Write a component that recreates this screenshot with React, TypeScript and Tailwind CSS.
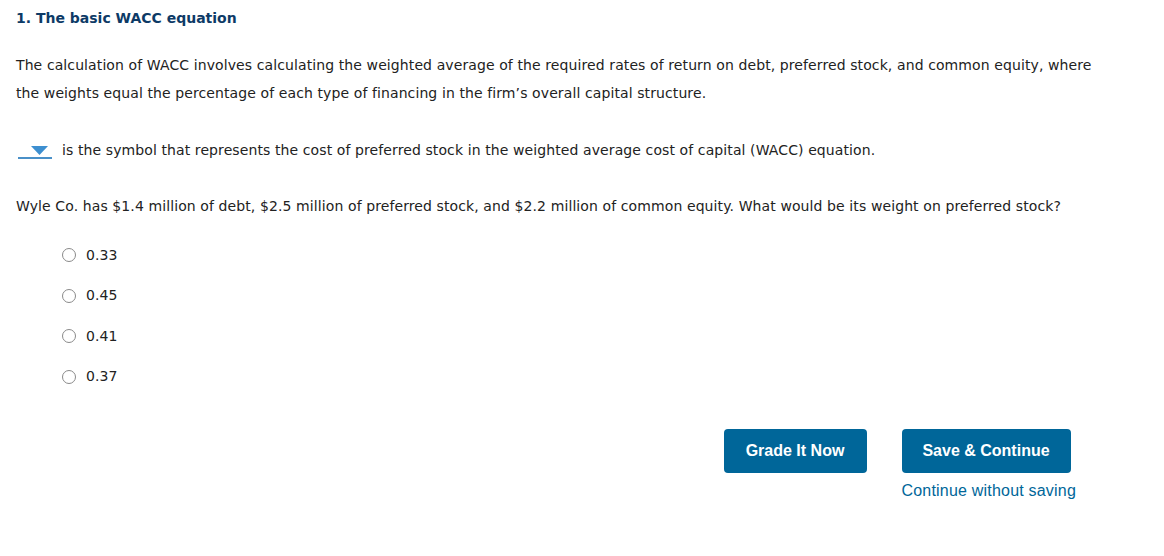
import React from "react";

export default function App() {
  const opts = ["0.33", "0.45", "0.41", "0.37"];
  return (
    <div className="w-[1164px] h-[556px] bg-white text-[#222] font-['DejaVu_Sans',Verdana,sans-serif] text-[14px] tracking-[0.1px]">
      <div className="pl-4 pt-[9px]">
        <h1 className="font-bold text-[14px] tracking-normal leading-[18px] text-[#0d3a66]">1. The basic WACC equation</h1>
        <p className="mt-[24px] leading-[28px] w-[1090px]">
          The calculation of WACC involves calculating the weighted average of the required rates of return on debt, preferred stock, and common equity, where the weights equal the percentage of each type of financing in the firm’s overall capital structure.
        </p>
        <div className="mt-[29px] flex items-center h-[28px]">
          <div className="ml-[2px] w-[34px] h-[18px] border-b-2 border-[#4a90c8] flex items-start justify-end pr-[4px] pt-[5px]">
            <svg width="17" height="9" viewBox="0 0 17 9">
              <polygon points="0,0 17,0 8.5,9" fill="#3d8fd0" />
            </svg>
          </div>
          <span className="ml-[10px]">is the symbol that represents the cost of preferred stock in the weighted average cost of capital (WACC) equation.</span>
        </div>
        <p className="mt-[28px] leading-[28px]">
          Wyle Co. has $1.4 million of debt, $2.5 million of preferred stock, and $2.2 million of common equity. What would be its weight on preferred stock?
        </p>
        <div className="mt-[21px] flex flex-col gap-[12.67px] pl-[46px]">
          {opts.map((o) => (
            <label key={o} className="flex items-center h-[28px]">
              <span className="w-[14px] h-[14px] rounded-full border border-[#8a8a8a] bg-white" />
              <span className="ml-[10px]">{o}</span>
            </label>
          ))}
        </div>
      </div>
      <div className="flex justify-end pr-[88px] mt-[38px] gap-[35px] font-['Liberation_Sans',Arial,sans-serif] tracking-normal">
        <button className="w-[143px] h-[44px] rounded-[4px] bg-[#006699] text-white font-bold text-[16px]">Grade It Now</button>
        <div className="flex flex-col items-start">
          <button className="w-[169px] h-[44px] rounded-[4px] bg-[#006699] text-white font-bold text-[16px]">Save &amp; Continue</button>
          <a className="mt-[8px] text-[16px] tracking-[0.2px] leading-[20px] text-[#006699]">Continue without saving</a>
        </div>
      </div>
    </div>
  );
}
